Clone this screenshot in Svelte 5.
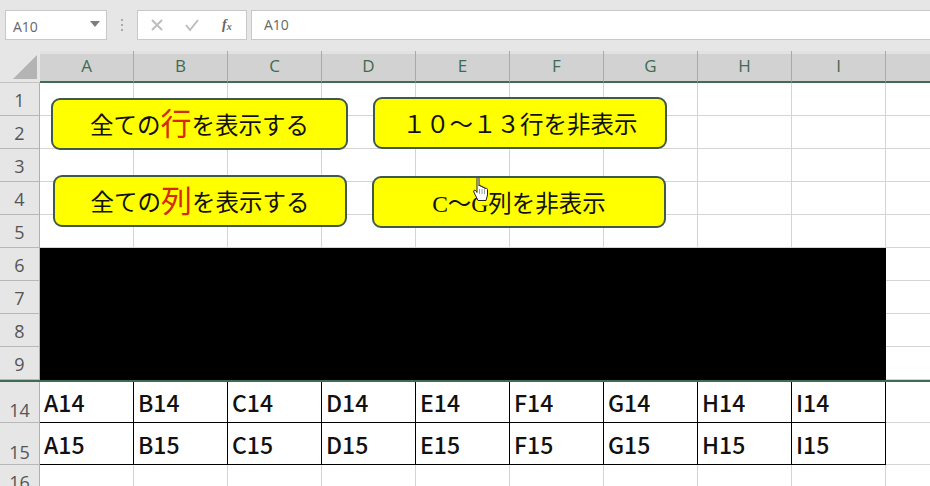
<script lang="ts">
    const columns = ["A", "B", "C", "D", "E", "F", "G", "H", "I"];
    const topRows = [1, 2, 3, 4, 5];
    const hiddenRows = [6, 7, 8, 9];
    const dataRows = [14, 15];
</script>

<div class="excel">
    <div class="formula-bar">
        <div class="name-box">
            <span>A10</span>
            <svg width="10" height="6" viewBox="0 0 10 6"><path d="M0 0h10L5 6z" fill="#7d7d7d" /></svg>
        </div>
        <div class="grip"><i></i><i></i><i></i></div>
        <div class="fx-box">
            <svg width="14" height="14" viewBox="0 0 14 14"><path d="M2 2l10 10M12 2L2 12" stroke="#bdbdbd" stroke-width="2" fill="none" /></svg>
            <svg width="16" height="14" viewBox="0 0 16 14"><path d="M2 7l4 5 8-10" stroke="#bdbdbd" stroke-width="2" fill="none" /></svg>
            <span class="fx">f<sub>x</sub></span>
        </div>
        <div class="formula-input">A10</div>
    </div>

    <div class="sheet">
        <div class="corner"><svg width="24" height="24" viewBox="0 0 24 24"><path d="M24 0v24H0z" fill="#b4b4b4" /></svg></div>
        {#each columns as col}
            <div class="col-head">{col}</div>
        {/each}
        <div class="col-head rest"></div>

        {#each topRows as row}
            <div class="row-head">{row}</div>
            {#each columns as col}
                <div class="cell"></div>
            {/each}
            <div class="cell rest"></div>
        {/each}

        {#each hiddenRows as row}
            <div class="row-head">{row}</div>
            {#each columns as col}
                <div class="cell black"></div>
            {/each}
            <div class="cell rest"></div>
        {/each}

        <div class="fold"></div>

        {#each dataRows as row}
            <div class="row-head tall">{row}</div>
            {#each columns as col}
                <div class="cell data">{col}{row}</div>
            {/each}
            <div class="cell rest"></div>
        {/each}

        <div class="row-head">16</div>
        {#each columns as col}
            <div class="cell"></div>
        {/each}
        <div class="cell rest"></div>

        <button class="macro b1">全ての<em>行</em>を表示する</button>
        <button class="macro b2">１０～１３行を非表示</button>
        <button class="macro b3">全ての<em>列</em>を表示する</button>
        <button class="macro b4">C～G列を非表示</button>

        <svg class="hand" width="16" height="25" viewBox="0 0 16 25">
            <path d="M4 1.5c0-1.2 2-1.2 2 0V9c0-1 2-1 2 0v1c0-1 2-1 2 0v1c0-1 2-1 2 0v1c0-1 2.500-1 2.500 .5V18l-1.500 5.500H5L.8 15c-.8-1.500 1-2.500 2-1.300L4 15.500z" fill="#fff" stroke="#222" stroke-width="1" stroke-linejoin="round" />
            <path d="M6.500 12v5M9 12v5M11.500 12v5" stroke="#777" stroke-width=".7" />
        </svg>
    </div>
</div>

<style>
    :global(body) {
        margin: 0;
        overflow: hidden;
        background: #fff;
    }

    .excel {
        width: 930px;
        height: 486px;
        overflow: hidden;
        font-family: "Noto Sans CJK JP", "Noto Sans", sans-serif;
    }

    .formula-bar {
        display: flex;
        align-items: center;
        height: 51px;
        box-sizing: border-box;
        padding: 10px 0 11px 5px;
        background: #e6e6e6;
        color: #666;
        font-size: 14px;
    }

    .name-box {
        width: 102px;
        height: 30px;
        box-sizing: border-box;
        display: flex;
        align-items: center;
        justify-content: space-between;
        padding: 2px 6px 0 7px;
        background: #fff;
        border: 1px solid #c8c8c8;
        font-family: "Open Sans", sans-serif;
    }

    .name-box svg {
        margin-bottom: 4px;
    }

    .grip {
        width: 30px;
        display: flex;
        flex-direction: column;
        align-items: center;
        gap: 3px;
    }

    .grip i {
        width: 2px;
        height: 2px;
        background: #a8a8a8;
    }

    .fx-box {
        width: 110px;
        height: 30px;
        box-sizing: border-box;
        display: flex;
        align-items: center;
        gap: 20px;
        padding-left: 12px;
        background: #fff;
        border: 1px solid #c8c8c8;
    }

    .fx {
        margin-left: 2px;
        font-family: "Liberation Serif", serif;
        font-style: italic;
        font-weight: 700;
        font-size: 14px;
        color: #666;
    }

    .fx sub {
        font-size: 10px;
        vertical-align: -1px;
    }

    .formula-input {
        flex: 1;
        height: 30px;
        box-sizing: border-box;
        margin-left: 4px;
        padding-left: 12px;
        line-height: 28px;
        background: #fff;
        border: 1px solid #c8c8c8;
        border-right: 0;
        font-family: "Open Sans", sans-serif;
    }

    .sheet {
        position: relative;
        display: grid;
        grid-template-columns: 40px repeat(9, 94px) 1fr;
        grid-auto-rows: 33px;
        grid-template-rows: 32px repeat(9, 33px) 2px 41px 42px 33px;
    }

    .corner {
        display: flex;
        align-items: flex-end;
        justify-content: flex-end;
        padding: 0 3px 3px 0;
        background: #e6e6e6;
        border-bottom: 1px solid #c4c4c4;
    }

    .col-head {
        display: flex;
        align-items: center;
        justify-content: center;
        box-sizing: border-box;
        padding-bottom: 2px;
        background: linear-gradient(#e2e2e2 3px, #d2d2d2 3px);
        border-right: 1px solid #a9a9a9;
        border-bottom: 2px solid #3f6b52;
        color: #3f6b52;
        font-family: "Open Sans", sans-serif;
        font-size: 17px;
    }

    .col-head.rest {
        border-right: 0;
    }

    .row-head {
        display: flex;
        align-items: center;
        justify-content: center;
        box-sizing: border-box;
        padding-top: 2px;
        background: #e6e6e6;
        border-right: 1px solid #b0b0b0;
        border-bottom: 1px solid #b8b8b8;
        color: #555;
        font-family: "Open Sans", sans-serif;
        font-size: 18px;
    }

    .row-head.tall {
        align-items: flex-end;
        padding-top: 0;
    }

    .cell {
        box-sizing: border-box;
        border-right: 1px solid #d4d4d4;
        border-bottom: 1px solid #d4d4d4;
    }

    .cell.rest {
        border-right: 0;
    }

    .cell.black {
        background: #000;
        border-color: #000;
    }

    .cell.data {
        display: flex;
        align-items: center;
        padding-left: 4px;
        border-color: #000;
        color: #111;
        font-size: 23px;
        font-weight: 500;
    }

    .fold {
        grid-column: 1 / -1;
        background: #3f6b52;
    }

    .macro {
        position: absolute;
        box-sizing: border-box;
        display: flex;
        align-items: center;
        justify-content: center;
        padding: 0;
        background: #ffff00;
        border: 2px solid #3f5a4a;
        border-radius: 9px;
        color: #111;
        font-family: "Liberation Serif", "Noto Sans CJK JP", serif;
        font-size: 23.500px;
        white-space: nowrap;
    }

    .macro em {
        color: #d42a0a;
        font-style: normal;
        font-size: 31px;
        line-height: 1;
    }

    .b1 {
        left: 51px;
        top: 47px;
        width: 297px;
        height: 52px;
    }

    .b2 {
        left: 373px;
        top: 46px;
        width: 294px;
        height: 52px;
    }

    .b3 {
        left: 53px;
        top: 124px;
        width: 294px;
        height: 52px;
    }

    .b4 {
        left: 372px;
        top: 125px;
        width: 294px;
        height: 52px;
    }

    .hand {
        position: absolute;
        left: 473px;
        top: 126px;
    }
</style>
